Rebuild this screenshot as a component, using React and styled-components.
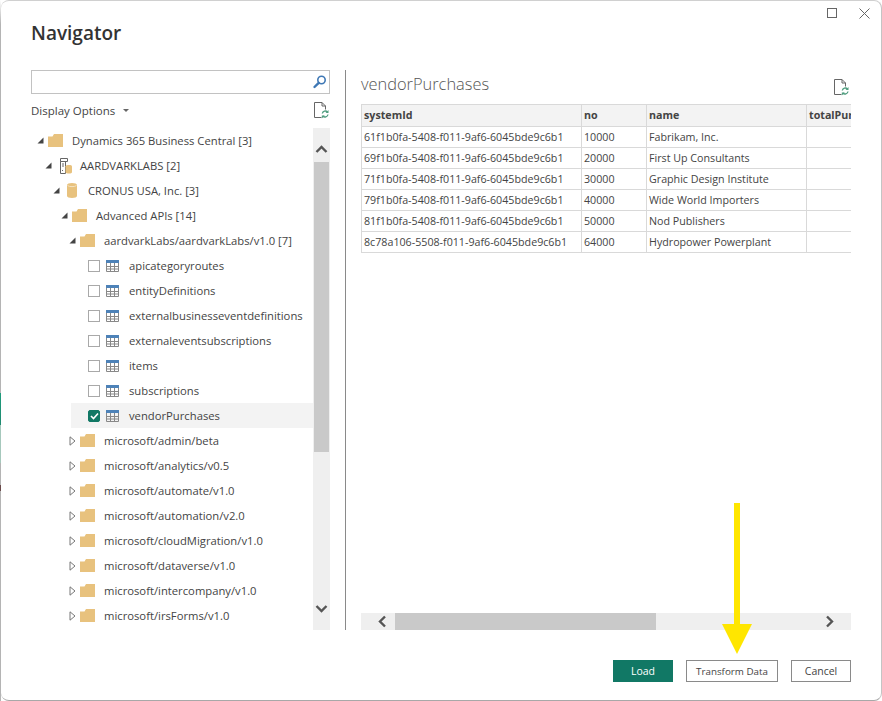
import React from "react";
import styled, { createGlobalStyle } from "styled-components";

const Global = createGlobalStyle`
  html, body { margin: 0; padding: 0; background: #fff; }
  * { box-sizing: border-box; }
`;

const FONT = `"Open Sans", "Noto Sans", "Liberation Sans", sans-serif`;

const Page = styled.div`
  position: relative;
  width: 882px;
  height: 701px;
  padding-left: 1px;
  overflow: hidden;
  font-family: ${FONT};
  color: #333;
  background: linear-gradient(
    to bottom,
    #fff 0, #b4b4b4 24px, #b4b4b4 393px, #1f9c7d 393px, #1f8a70 425px,
    #a6c8bc 425px, #a6c8bc 463px, #b4b4b4 463px, #b4b4b4 485px, #6a4a4a 485px,
    #6a4a4a 491px, #b4b4b4 491px, #b4b4b4 100%
  ) left top / 1px 100% no-repeat;
`;

const Dialog = styled.div`
  width: 881px;
  height: 701px;
  background: #fff;
  border-top: 1px solid #d0d0d0;
  border-right: 1px solid #c4c4c4;
  border-bottom: 1px solid #a8a8a8;
  border-radius: 8px;
  display: flex;
  flex-direction: column;
  padding: 0 30px 0 30px;
`;

const Header = styled.header`
  height: 69px;
  display: flex;
  justify-content: space-between;
  align-items: flex-start;
`;

const Title = styled.h1`
  margin: 20px 0 0;
  font-size: 19px;
  line-height: 25px;
  font-weight: 600;
  color: #333;
`;

const WindowControls = styled.div`
  display: flex;
  gap: 22px;
  margin: 7px -19px 0 0;
`;

const Body = styled.div`
  height: 560px;
  display: grid;
  grid-template-columns: 299px 1fr;
  column-gap: 15px;
`;

const LeftColumn = styled.div`
  display: flex;
  flex-direction: column;
  min-height: 0;
`;

const SearchBox = styled.div`
  height: 24px;
  flex: none;
  border: 1px solid #c2c2c2;
  display: flex;
  align-items: center;
  justify-content: flex-end;
  padding-right: 2px;
`;

const OptionsRow = styled.div`
  height: 34px;
  flex: none;
  display: flex;
  align-items: center;
  justify-content: space-between;
  padding: 0 1px 2px 0;
`;

const DisplayOptions = styled.span`
  display: inline-flex;
  align-items: center;
  gap: 8px;
  font-size: 11.5px;
  color: #444;
`;

const Caret = styled.span`
  width: 0;
  height: 0;
  border-left: 3px solid transparent;
  border-right: 3px solid transparent;
  border-top: 3px solid #666;
`;

const TreeWrap = styled.div`
  flex: 1;
  min-height: 0;
  display: flex;
`;

const Tree = styled.ul`
  list-style: none;
  margin: 0;
  padding: 0;
  flex: 1;
  overflow: hidden;
`;

const Row = styled.li`
  height: 25px;
  display: flex;
  align-items: center;
  padding-left: ${(p) => p.$indent}px;
  background: ${(p) => (p.$selected ? "#f3f3f3" : "transparent")};
  margin-left: ${(p) => (p.$selected ? 40 : 0)}px;
  font-size: 11.25px;
  color: #444;
  white-space: nowrap;
`;

const ArrowSlot = styled.span`
  width: 11px;
  flex: none;
  display: flex;
  align-items: center;
`;

const IconSlot = styled.span`
  width: ${(p) => p.$w}px;
  padding-left: ${(p) => p.$pad || 0}px;
  flex: none;
  display: flex;
  align-items: center;
`;

const Check = styled.span`
  width: 12px;
  height: 12px;
  flex: none;
  margin-right: 6px;
  border: 1px solid ${(p) => (p.$on ? "#117865" : "#a9a9a9")};
  border-radius: ${(p) => (p.$on ? 2 : 0)}px;
  background: ${(p) => (p.$on ? "#117865" : "#fff")};
  display: flex;
  align-items: center;
  justify-content: center;
`;

const VScroll = styled.div`
  width: 17px;
  flex: none;
  background: #efefef;
  display: flex;
  flex-direction: column;
  align-items: center;
`;

const ScrollBtn = styled.div`
  width: 15px;
  height: ${(p) => p.$h}px;
  padding-top: ${(p) => p.$top || 0}px;
  flex: none;
  display: flex;
  align-items: center;
  justify-content: center;
`;

const VThumb = styled.div`
  width: 15px;
  height: 290px;
  flex: none;
  background: #c9c9c9;
`;

const Spacer = styled.div`
  flex: 1;
`;

const RightColumn = styled.div`
  border-left: 1px solid #8a8a8a;
  padding-left: 15px;
  display: flex;
  flex-direction: column;
  min-width: 0;
`;

const PreviewHead = styled.div`
  height: 34px;
  flex: none;
  display: flex;
  align-items: center;
  justify-content: space-between;
  padding-right: 2px;
`;

const PreviewTitle = styled.h2`
  margin: 0 0 8px;
  font-size: 16.4px;
  font-weight: 300;
  color: #555;
`;

const RefreshWrap = styled.span`
  display: flex;
`;

const TableArea = styled.div`
  flex: 1;
  min-height: 0;
  overflow: hidden;
`;

const Table = styled.table`
  border-collapse: collapse;
  table-layout: fixed;
  width: 565px;
  font-size: 10.7px;
  color: #444;
`;

const Th = styled.th`
  height: 22px;
  padding: 0 0 2px 2px;
  text-align: left;
  font-weight: 700;
  background: #f3f3f3;
  border: 1px solid #d9d9d9;
  white-space: nowrap;
  overflow: hidden;
  color: #444;
`;

const Td = styled.td`
  height: 21px;
  padding: 0 0 1px 2px;
  border: 1px solid #d9d9d9;
  white-space: nowrap;
  overflow: hidden;
`;

const HScroll = styled.div`
  height: 17px;
  flex: none;
  background: #efefef;
  display: flex;
  align-items: center;
`;

const HBtn = styled.div`
  width: ${(p) => p.$w}px;
  height: 17px;
  padding-left: ${(p) => p.$pad || 0}px;
  flex: none;
  display: flex;
  align-items: center;
  justify-content: center;
`;

const HThumb = styled.div`
  width: 261px;
  height: 17px;
  flex: none;
  background: #c9c9c9;
`;

const Footer = styled.footer`
  flex: 1;
  display: flex;
  justify-content: flex-end;
  align-items: flex-start;
  gap: 13px;
  padding-top: 30px;
`;

const Button = styled.button`
  width: ${(p) => p.$w}px;
  height: 22px;
  padding: 0;
  font-family: ${FONT};
  font-size: ${(p) => p.$size || 10.5}px;
  color: ${(p) => (p.$primary ? "#fff" : "#444")};
  background: ${(p) => (p.$primary ? "#117865" : "#fff")};
  border: 1px solid ${(p) => (p.$primary ? "#117865" : "#8a8a8a")};
`;

const YellowArrow = styled.svg`
  position: absolute;
  left: 722px;
  top: 503px;
`;

const Folder = () => (
  <svg width="15" height="13" viewBox="0 0 15 13">
    <path d="M0 2.500H4.500L6 0H15V13H0Z" fill="#e8c27e" />
  </svg>
);

const Database = () => (
  <svg width="10" height="15" viewBox="0 0 10 15">
    <path d="M0 2C0 .7 2.200 0 5 0s5 .7 5 2v11c0 1.300-2.200 2-5 2s-5-.7-5-2Z" fill="#e8c27e" />
    <path d="M0.500 2.500C2 4 8 4 9.500 2.500" stroke="#f6e4c2" fill="none" />
  </svg>
);

const Server = () => (
  <svg width="13" height="16" viewBox="0 0 13 16">
    <path d="M.5.5h7v3h-7zM.5 3.500h5v12h-5z" fill="#fff" stroke="#666" />
    <path d="M2 6h2M2 8h2M2 12.500h1" stroke="#666" />
    <path d="M5.500 8.200C5.500 7.400 7.500 7 9 7s3 .4 3 1.200v6.100c0 .8-1.500 1.200-3 1.200s-3.500-.4-3.500-1.200Z" fill="#e8c27e" />
  </svg>
);

const TableIcon = () => (
  <svg width="13" height="12" viewBox="0 0 13 12">
    <rect x="0" y="0" width="13" height="3" fill="#4d82b8" />
    <path d="M.5 3v8.500h12V3M.5 6.500h12M.5 9h12M4.500 3v8.500M8.500 3v8.500" fill="none" stroke="#888" />
  </svg>
);

const Expanded = () => (
  <svg width="7" height="7" viewBox="0 0 7 7">
    <path d="M6.500.5V6.500H.5Z" fill="#444" />
  </svg>
);

const Collapsed = () => (
  <svg width="7" height="10" viewBox="0 0 7 10">
    <path d="M1 .8 6 5 1 9.200Z" fill="#fff" stroke="#777" />
  </svg>
);

const CheckMark = () => (
  <svg width="9" height="8" viewBox="0 0 9 8">
    <path d="M1 4 3.500 6.500 8 1.500" fill="none" stroke="#fff" strokeWidth="1.600" />
  </svg>
);

const SearchIcon = () => (
  <svg width="16" height="16" viewBox="0 0 16 16">
    <circle cx="10.500" cy="6" r="3.700" fill="none" stroke="#3f78b5" strokeWidth="1.600" />
    <path d="M7.700 8.800 3.500 13" stroke="#3f78b5" strokeWidth="2.400" strokeLinecap="round" />
  </svg>
);

const RefreshDoc = () => (
  <svg width="15" height="17" viewBox="0 0 15 17">
    <path d="M7.500 15.500H.5V.5H8L11.500 4V7.500M8 .5V4h3.500" fill="none" stroke="#666" />
    <path d="M8.300 11.500a3 3 0 0 1 5.200-1.500M14 12.500a3 3 0 0 1-5.200 1.500" fill="none" stroke="#4f9d7f" strokeWidth="1.300" />
    <path d="M14.500 8v3h-3ZM7.800 16.500v-3h3Z" fill="#4f9d7f" />
  </svg>
);

const Chevron = ({ dir }) => {
  const rot = { up: 0, down: 180, left: 270, right: 90 }[dir];
  return (
    <svg width="13" height="13" viewBox="0 0 13 13" style={{ transform: `rotate(${rot}deg)` }}>
      <path d="M1.500 9 6.500 4l5 5" fill="none" stroke="#555" strokeWidth="2.400" />
    </svg>
  );
};

const Maximize = () => (
  <svg width="10" height="10" viewBox="0 0 10 10">
    <rect x=".5" y=".5" width="9" height="9" fill="none" stroke="#666" />
  </svg>
);

const Close = () => (
  <svg width="11" height="11" viewBox="0 0 11 11">
    <path d="M.5.5l10 10M10.500.5l-10 10" fill="none" stroke="#666" />
  </svg>
);

const branches = [
  { level: 0, icon: "folder", label: "Dynamics 365 Business Central [3]" },
  { level: 1, icon: "server", label: "AARDVARKLABS [2]" },
  { level: 2, icon: "db", label: "CRONUS USA, Inc. [3]" },
  { level: 3, icon: "folder", label: "Advanced APIs [14]" },
  { level: 4, icon: "folder", label: "aardvarkLabs/aardvarkLabs/v1.0 [7]" },
];

const tables = [
  "apicategoryroutes",
  "entityDefinitions",
  "externalbusinesseventdefinitions",
  "externaleventsubscriptions",
  "items",
  "subscriptions",
  "vendorPurchases",
];

const folders = [
  "microsoft/admin/beta",
  "microsoft/analytics/v0.5",
  "microsoft/automate/v1.0",
  "microsoft/automation/v2.0",
  "microsoft/cloudMigration/v1.0",
  "microsoft/dataverse/v1.0",
  "microsoft/intercompany/v1.0",
  "microsoft/irsForms/v1.0",
];

const data = [
  ["61f1b0fa-5408-f011-9af6-6045bde9c6b1", "10000", "Fabrikam, Inc."],
  ["69f1b0fa-5408-f011-9af6-6045bde9c6b1", "20000", "First Up Consultants"],
  ["71f1b0fa-5408-f011-9af6-6045bde9c6b1", "30000", "Graphic Design Institute"],
  ["79f1b0fa-5408-f011-9af6-6045bde9c6b1", "40000", "Wide World Importers"],
  ["81f1b0fa-5408-f011-9af6-6045bde9c6b1", "50000", "Nod Publishers"],
  ["8c78a106-5508-f011-9af6-6045bde9c6b1", "64000", "Hydropower Powerplant"],
];

const iconFor = {
  folder: { node: <Folder />, w: 24, pad: 0 },
  server: { node: <Server />, w: 24, pad: 4 },
  db: { node: <Database />, w: 24, pad: 3 },
};

export default function App() {
  return (
    <Page>
      <Global />
      <Dialog>
        <Header>
          <Title>Navigator</Title>
          <WindowControls>
            <Maximize />
            <Close />
          </WindowControls>
        </Header>
        <Body>
          <LeftColumn>
            <SearchBox>
              <SearchIcon />
            </SearchBox>
            <OptionsRow>
              <DisplayOptions>
                Display Options <Caret />
              </DisplayOptions>
              <RefreshWrap>
                <RefreshDoc />
              </RefreshWrap>
            </OptionsRow>
            <TreeWrap>
              <Tree>
                {branches.map((b) => (
                  <Row key={b.label} $indent={6 + b.level * 8}>
                    <ArrowSlot>
                      <Expanded />
                    </ArrowSlot>
                    <IconSlot $w={iconFor[b.icon].w} $pad={iconFor[b.icon].pad}>
                      {iconFor[b.icon].node}
                    </IconSlot>
                    {b.label}
                  </Row>
                ))}
                {tables.map((t) => {
                  const on = t === "vendorPurchases";
                  return (
                    <Row key={t} $indent={on ? 17 : 57} $selected={on}>
                      <Check $on={on}>{on && <CheckMark />}</Check>
                      <IconSlot $w={23}>
                        <TableIcon />
                      </IconSlot>
                      {t}
                    </Row>
                  );
                })}
                {folders.map((f) => (
                  <Row key={f} $indent={38}>
                    <ArrowSlot>
                      <Collapsed />
                    </ArrowSlot>
                    <IconSlot $w={24}>
                      <Folder />
                    </IconSlot>
                    {f}
                  </Row>
                ))}
              </Tree>
              <VScroll>
                <ScrollBtn $h={34} $top={8}>
                  <Chevron dir="up" />
                </ScrollBtn>
                <VThumb />
                <Spacer />
                <ScrollBtn $h={44}>
                  <Chevron dir="down" />
                </ScrollBtn>
              </VScroll>
            </TreeWrap>
          </LeftColumn>
          <RightColumn>
            <PreviewHead>
              <PreviewTitle>vendorPurchases</PreviewTitle>
              <RefreshWrap>
                <RefreshDoc />
              </RefreshWrap>
            </PreviewHead>
            <TableArea>
              <Table>
                <colgroup>
                  <col width="220" />
                  <col width="65" />
                  <col width="160" />
                  <col width="120" />
                </colgroup>
                <thead>
                  <tr>
                    <Th>systemId</Th>
                    <Th>no</Th>
                    <Th>name</Th>
                    <Th>totalPurchases</Th>
                  </tr>
                </thead>
                <tbody>
                  {data.map((r) => (
                    <tr key={r[0]}>
                      <Td>{r[0]}</Td>
                      <Td>{r[1]}</Td>
                      <Td>{r[2]}</Td>
                      <Td />
                    </tr>
                  ))}
                </tbody>
              </Table>
            </TableArea>
            <HScroll>
              <HBtn $w={34} $pad={8}>
                <Chevron dir="left" />
              </HBtn>
              <HThumb />
              <Spacer />
              <HBtn $w={44}>
                <Chevron dir="right" />
              </HBtn>
            </HScroll>
          </RightColumn>
        </Body>
        <Footer>
          <Button $primary $w={60}>Load</Button>
          <Button $w={92} $size={9.8}>Transform Data</Button>
          <Button $w={60}>Cancel</Button>
        </Footer>
      </Dialog>
      <YellowArrow width="30" height="151" viewBox="0 0 30 151">
        <path d="M12 0h6v121h12L15 151 0 121h12Z" fill="#ffe600" />
      </YellowArrow>
    </Page>
  );
}
